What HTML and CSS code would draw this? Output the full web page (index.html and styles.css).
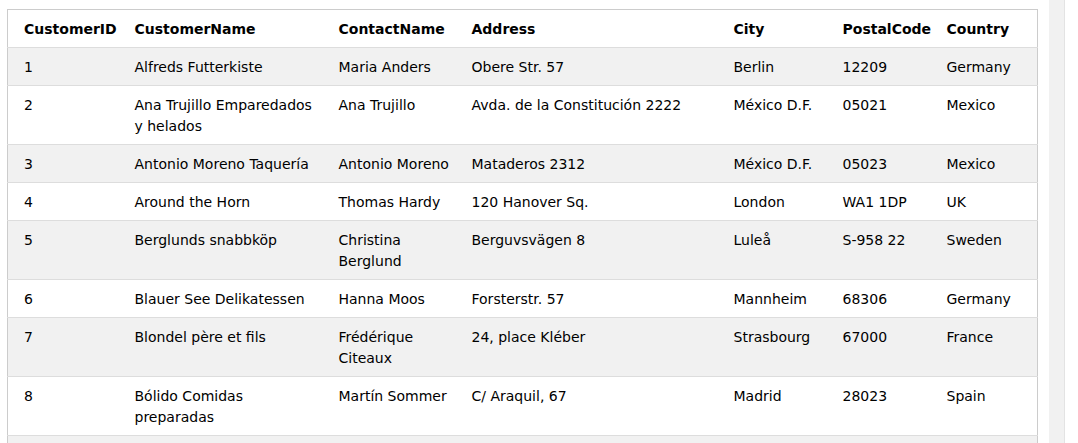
FILE: index.html
```html
<!DOCTYPE html>
<html>
<head>
<meta charset="utf-8">
<link rel="stylesheet" href="styles.css">
</head>
<body>
<div class="page">
  <div class="result">
    <table class="grid">
      <colgroup>
        <col class="c1"><col class="c2"><col class="c3"><col class="c4"><col class="c5"><col class="c6"><col class="c7">
      </colgroup>
      <thead>
        <tr><th>CustomerID</th><th>CustomerName</th><th>ContactName</th><th>Address</th><th>City</th><th>PostalCode</th><th>Country</th></tr>
      </thead>
      <tbody>
        <tr><td>1</td><td>Alfreds Futterkiste</td><td>Maria Anders</td><td>Obere Str. 57</td><td>Berlin</td><td>12209</td><td>Germany</td></tr>
        <tr><td>2</td><td>Ana Trujillo Emparedados y helados</td><td>Ana Trujillo</td><td>Avda. de la Constitución 2222</td><td>México D.F.</td><td>05021</td><td>Mexico</td></tr>
        <tr><td>3</td><td>Antonio Moreno Taquería</td><td>Antonio Moreno</td><td>Mataderos 2312</td><td>México D.F.</td><td>05023</td><td>Mexico</td></tr>
        <tr><td>4</td><td>Around the Horn</td><td>Thomas Hardy</td><td>120 Hanover Sq.</td><td>London</td><td>WA1 1DP</td><td>UK</td></tr>
        <tr><td>5</td><td>Berglunds snabbköp</td><td>Christina Berglund</td><td>Berguvsvägen 8</td><td>Luleå</td><td>S-958 22</td><td>Sweden</td></tr>
        <tr><td>6</td><td>Blauer See Delikatessen</td><td>Hanna Moos</td><td>Forsterstr. 57</td><td>Mannheim</td><td>68306</td><td>Germany</td></tr>
        <tr><td>7</td><td>Blondel père et fils</td><td>Frédérique Citeaux</td><td>24, place Kléber</td><td>Strasbourg</td><td>67000</td><td>France</td></tr>
        <tr><td>8</td><td>Bólido Comidas preparadas</td><td>Martín Sommer</td><td>C/ Araquil, 67</td><td>Madrid</td><td>28023</td><td>Spain</td></tr>
        <tr class="tail"><td></td><td></td><td></td><td></td><td></td><td></td><td></td></tr>
      </tbody>
    </table>
  </div>
  <div class="rail"></div>
</div>
</body>
</html>
```
FILE: styles.css
```css
html, body {
  margin: 0;
  padding: 0;
  height: 100%;
  overflow: hidden;
  background: #fff;
}
.page {
  display: flex;
  height: 443px;
  overflow: hidden;
  font-family: "DejaVu Sans", Verdana, sans-serif;
  font-size: 14px;
  line-height: 21px;
  color: #000;
}
.result {
  flex: 0 0 1049px;
  box-sizing: border-box;
  padding: 9px 11px 0 7px;
}
.rail {
  flex: 0 0 15px;
  background: #f1f1f1;
  border-right: 1px solid #e3e3e3;
}
.grid {
  border-collapse: collapse;
  border-spacing: 0;
  table-layout: fixed;
  width: 1031px;
  border: 1px solid #ccc;
}
.c1 { width: 119px; }
.c2 { width: 204px; }
.c3 { width: 133px; }
.c4 { width: 262px; }
.c5 { width: 109px; }
.c6 { width: 104px; }
.c7 { width: 99px; }
.grid th, .grid td {
  padding: 9px 8px 7px;
  text-align: left;
  vertical-align: top;
}
.grid th:first-child, .grid td:first-child {
  padding-left: 16px;
}
.grid th {
  font-weight: bold;
}
.grid tr {
  border-bottom: 1px solid #ddd;
}
.grid tbody tr:nth-child(odd) {
  background: #f1f1f1;
}
.grid .tail td {
  height: 21px;
}
```
